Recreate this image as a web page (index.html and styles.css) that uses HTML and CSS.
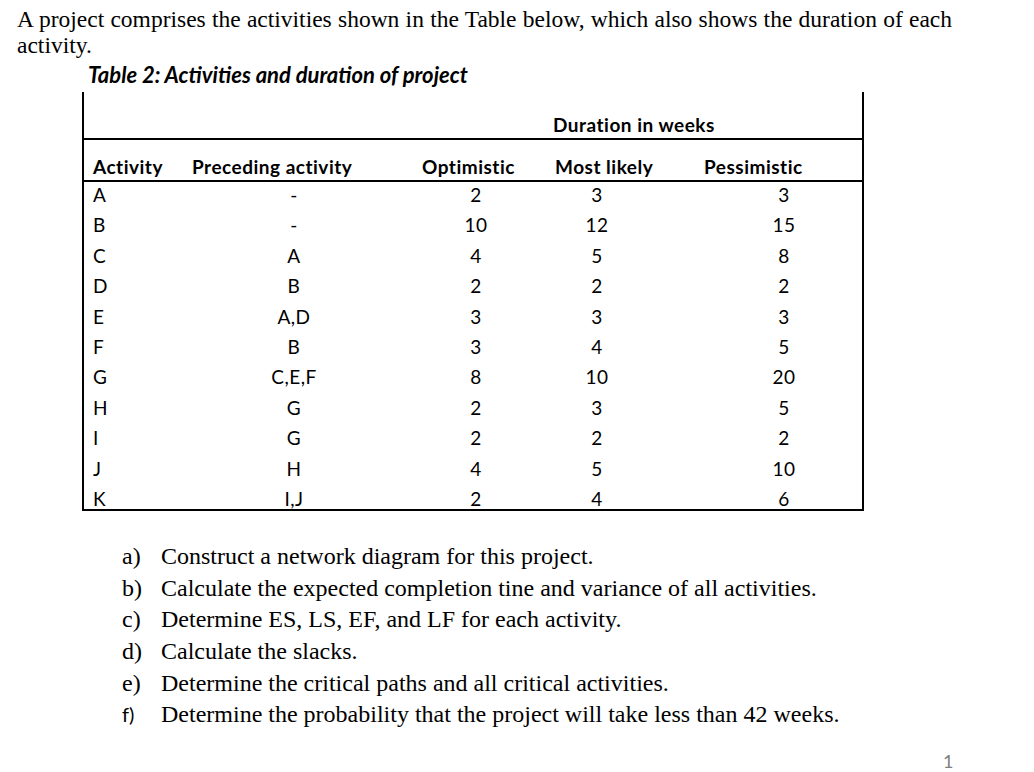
FILE: index.html
```html
<!DOCTYPE html>
<html>
<head>
<meta charset="utf-8">
<link rel="stylesheet" href="styles.css">
</head>
<body>
<div class="page">
  <p class="intro">A project comprises the activities shown in the Table below, which also shows the duration of each activity.</p>
  <div class="caption">Table 2: Activities and duration of project</div>
  <div class="table">
    <div class="top-row">
      <div class="dur">Duration in weeks</div>
    </div>
    <div class="head-row">
      <div class="h c1">Activity</div>
      <div class="h c2">Preceding activity</div>
      <div class="h c3">Optimistic</div>
      <div class="h c4">Most likely</div>
      <div class="h c5">Pessimistic</div>
    </div>
    <div class="body">
      <div class="c1">A</div><div class="c2">-</div><div class="c3">2</div><div class="c4">3</div><div class="c5">3</div>
      <div class="c1">B</div><div class="c2">-</div><div class="c3">10</div><div class="c4">12</div><div class="c5">15</div>
      <div class="c1">C</div><div class="c2">A</div><div class="c3">4</div><div class="c4">5</div><div class="c5">8</div>
      <div class="c1">D</div><div class="c2">B</div><div class="c3">2</div><div class="c4">2</div><div class="c5">2</div>
      <div class="c1">E</div><div class="c2">A,D</div><div class="c3">3</div><div class="c4">3</div><div class="c5">3</div>
      <div class="c1">F</div><div class="c2">B</div><div class="c3">3</div><div class="c4">4</div><div class="c5">5</div>
      <div class="c1">G</div><div class="c2">C,E,F</div><div class="c3">8</div><div class="c4">10</div><div class="c5">20</div>
      <div class="c1">H</div><div class="c2">G</div><div class="c3">2</div><div class="c4">3</div><div class="c5">5</div>
      <div class="c1">I</div><div class="c2">G</div><div class="c3">2</div><div class="c4">2</div><div class="c5">2</div>
      <div class="c1">J</div><div class="c2">H</div><div class="c3">4</div><div class="c4">5</div><div class="c5">10</div>
      <div class="c1">K</div><div class="c2">I,J</div><div class="c3">2</div><div class="c4">4</div><div class="c5">6</div>
    </div>
  </div>
  <ol class="questions">
    <li><span class="lbl">a)</span><span>Construct a network diagram for this project.</span></li>
    <li><span class="lbl">b)</span><span>Calculate the expected completion tine and variance of all activities.</span></li>
    <li><span class="lbl">c)</span><span>Determine ES, LS, EF, and LF for each activity.</span></li>
    <li><span class="lbl">d)</span><span>Calculate the slacks.</span></li>
    <li><span class="lbl">e)</span><span>Determine the critical paths and all critical activities.</span></li>
    <li><span class="lbl lbl-sans">f)</span><span>Determine the probability that the project will take less than 42 weeks.</span></li>
  </ol>
  <div class="pagenum">1</div>
</div>
</body>
</html>
```
FILE: styles.css
```css
html, body {
  margin: 0;
  padding: 0;
  background: #ffffff;
}
.page {
  width: 1034px;
  height: 772px;
  position: relative;
  overflow: hidden;
  color: #000;
  font-family: "Liberation Serif", "Times New Roman", serif;
}
.intro {
  margin: 6px 82px 0 17px;
  font-size: 23.5px;
  line-height: 26px;
  text-align: justify;
}
.caption {
  margin: 5px 0 0 88px;
  font-family: Lato, "Open Sans", sans-serif;
  font-weight: 700;
  font-style: italic;
  font-size: 22px;
  line-height: 24px;
}
.table {
  margin: 5px 0 0 82px;
  width: 778px;
  border-left: 2px solid #000;
  border-right: 2px solid #000;
  border-bottom: 2px solid #000;
  font-family: Lato, "Open Sans", sans-serif;
  font-size: 19px;
  letter-spacing: 0.5px;
}
.top-row {
  height: 46px;
  border-bottom: 2px solid #000;
  display: flex;
  align-items: flex-end;
}
.dur {
  font-weight: 700;
  padding-left: 469px;
  line-height: 24px;
  padding-bottom: 1px;
}
.head-row,
.body {
  display: grid;
  grid-template-columns: 98px 224px 140px 154px 162px;
}
.head-row {
  height: 40px;
  border-bottom: 2px solid #000;
  align-items: end;
}
.h {
  font-weight: 700;
  text-align: left;
  line-height: 24px;
  padding-bottom: 1px;
  white-space: nowrap;
}
.h.c1 { padding-left: 9px; }
.h.c2 { padding-left: 10px; }
.h.c3 { padding-left: 16px; }
.h.c4 { padding-left: 9px; }
.h.c5 { padding-left: 4px; }
.body {
  grid-template-rows: repeat(10, 30.4px) 23px;
}
.body > div {
  line-height: 26px;
  text-align: center;
}
.body > .c1 { text-align: left; padding-left: 9px; }
.body > .c4 { padding-right: 52px; }
.body > .c5 { padding-left: 6px; }
.questions {
  list-style: none;
  margin: 30px 0 0 122px;
  padding: 0;
  font-size: 24px;
  line-height: 31.7px;
}
.questions li {
  display: flex;
}
.lbl {
  width: 39px;
  flex: none;
}
.lbl-sans {
  font-family: Lato, "Open Sans", sans-serif;
  font-size: 20px;
}
.pagenum {
  position: absolute;
  left: 943px;
  top: 751px;
  font-family: Lato, "Open Sans", sans-serif;
  font-size: 18px;
  line-height: 20px;
  color: #7f7f7f;
}
```
